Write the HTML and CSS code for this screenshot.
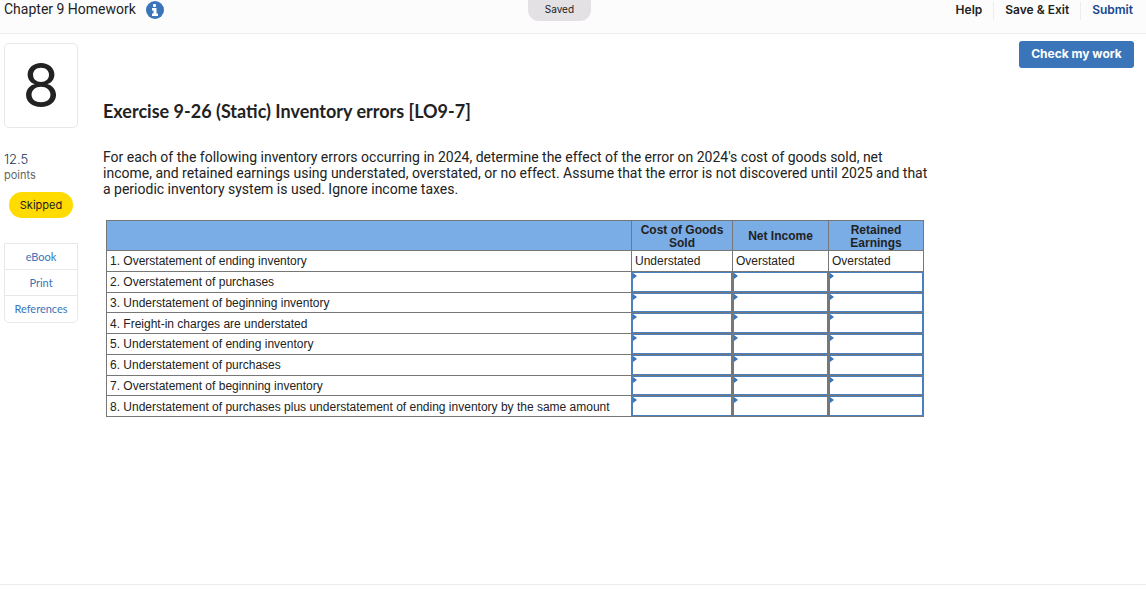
FILE: index.html
```html
<!DOCTYPE html>
<html lang="en">
<head>
  <meta charset="UTF-8" />
  <title>Chapter 9 Homework</title>
  <link rel="stylesheet" href="styles.css">
</head>
<body>
  <header class="topbar">
    <div class="assignment">
      <span>Chapter 9 Homework</span>
      <button type="button" class="info" aria-label="Assignment info">
        <svg width="18" height="18" viewBox="0 0 18 18">
          <circle cx="9" cy="9" r="9" fill="#3a75ba" />
          <rect x="7" y="3" width="3" height="3" rx="1" fill="#fff" />
          <path d="M6 7h4.5v5.5H12V15H6v-2.500h1.500V9.500H6z" fill="#fff" />
        </svg>
      </button>
    </div>
    <span class="saved">Saved</span>
    <nav class="actions">
      <a href="#">Help</a>
      <a href="#">Save &amp; Exit</a>
      <a href="#" class="submit">Submit</a>
    </nav>
  </header>

  <main class="page">
    <aside class="sidebar">
      <div class="number">8</div>
      <div class="points">12.5</div>
      <div class="points-label">points</div>
      <span class="skipped">Skipped</span>
      <nav class="resources">
        <a href="#">eBook</a>
        <a href="#">Print</a>
        <a href="#">References</a>
      </nav>
    </aside>

    <section class="question">
      <button type="button" class="check">Check my work</button>
      <h1>Exercise 9-26 (Static) Inventory errors [LO9-7]</h1>
      <p>
        For each of the following inventory errors occurring in 2024, determine the effect of the error on 2024's cost of goods sold, net<br>
        income, and retained earnings using understated, overstated, or no effect. Assume that the error is not discovered until 2025 and that<br>
        a periodic inventory system is used. Ignore income taxes.
      </p>

      <table class="answers">
        <colgroup>
          <col>
          <col class="col-goods">
          <col class="col-income">
          <col class="col-earnings">
        </colgroup>
        <thead>
          <tr>
            <td></td>
            <th scope="col">Cost of Goods Sold</th>
            <th scope="col">Net Income</th>
            <th scope="col">Retained Earnings</th>
          </tr>
        </thead>
        <tbody id="answer-rows">
          <tr>
            <th scope="row">1. Overstatement of ending inventory</th>
            <td>Understated</td>
            <td>Overstated</td>
            <td>Overstated</td>
          </tr>
        </tbody>
      </table>
    </section>
  </main>

  <footer class="bottombar"></footer>

  <script src="script.js"></script>
</body>
</html>
```
FILE: styles.css
```css
* {
  box-sizing: border-box;
}

body {
  margin: 0;
  min-height: 100vh;
  display: flex;
  flex-direction: column;
  font-family: 'Inter', sans-serif;
  font-size: 14px;
  color: #222;
  background-color: #fff;
}

a {
  text-decoration: none;
}

button {
  font-family: inherit;
  border: none;
  cursor: pointer;
}

/* Top bar */
.topbar {
  display: grid;
  grid-template-columns: 29fr auto 30fr;
  height: 34px;
  padding: 0 13px 0 4px;
  background-color: #fcfcfc;
  border-bottom: 1px solid #ececec;
}

.assignment {
  display: flex;
  align-items: flex-end;
  gap: 10px;
  height: 19px;
  line-height: 19px;
  font-family: 'Roboto', sans-serif;
}

.info {
  display: flex;
  padding: 0;
  background: none;
}

.saved {
  width: 63px;
  height: 21px;
  line-height: 18px;
  text-align: center;
  font-size: 10px;
  background-color: #e4e1e5;
  border-radius: 0 0 11px 11px;
}

.actions {
  display: flex;
  justify-content: flex-end;
  padding-top: 2px;
}

.actions a {
  height: 18px;
  line-height: 16px;
  padding: 0 11px;
  font-size: 12px;
  font-weight: 600;
  color: #222;
  border-right: 1px solid #ececec;
}

.actions .submit {
  padding-right: 0;
  color: #16478e;
  border-right: none;
}

/* Page */
.page {
  flex: 1;
  display: flex;
  gap: 25px;
  padding: 7px 12px 0 4px;
}

.sidebar {
  width: 74px;
  padding-top: 2px;
}

.number {
  height: 85px;
  line-height: 83px;
  text-align: center;
  font-size: 60px;
  border: 1px solid #e8e8e8;
  border-radius: 5px;
}

.points {
  margin-top: 23px;
  line-height: 16px;
  font-size: 13px;
  font-weight: 300;
  color: #16365c;
}

.points-label {
  line-height: 16px;
  font-size: 11px;
  color: #666;
}

.skipped {
  display: block;
  width: 64px;
  margin: 9px auto 25px;
  line-height: 26px;
  text-align: center;
  font-size: 11px;
  background-color: #ffdb00;
  border-radius: 13px;
}

.resources {
  padding-bottom: 1px;
  border: 1px solid #e8e8e8;
  border-radius: 0 0 5px 5px;
}

.resources a {
  display: block;
  line-height: 25px;
  text-align: center;
  font-family: 'Lato', sans-serif;
  font-size: 11px;
  color: #3a75ba;
}

.resources a + a {
  border-top: 1px solid #e8e8e8;
}

.question {
  flex: 1;
}

.check {
  display: block;
  width: 115px;
  height: 27px;
  margin-left: auto;
  padding: 0 0 2px;
  font-size: 12px;
  font-weight: 700;
  color: #fff;
  background-color: #3a75ba;
  border-radius: 3px;
}

h1 {
  margin: 33px 0 0;
  line-height: 20px;
  font-family: 'Lato', sans-serif;
  font-size: 18px;
  font-weight: 700;
}

.question p {
  margin: 28px 0 23px;
  line-height: 16px;
  font-family: 'Roboto', sans-serif;
  white-space: nowrap;
}

/* Answer table */
.answers {
  width: 818px;
  height: 197px;
  margin-left: 3px;
  table-layout: fixed;
  border-collapse: collapse;
  font-family: 'Liberation Sans', sans-serif;
  font-size: 12px;
  line-height: 13px;
}

.col-goods {
  width: 101px;
}

.col-income {
  width: 96px;
}

.col-earnings {
  width: 95px;
}

.answers th,
.answers td {
  padding: 2px 3px 0;
  border: 1px solid #777;
}

.answers thead tr {
  height: 30px;
  background-color: #7aace6;
}

.answers thead th {
  padding: 2px 8px 0;
}

.answers tbody tr {
  height: 20px;
}

.answers tbody th {
  text-align: left;
  font-weight: 400;
}

.answers .choice {
  position: relative;
  height: 20px;
  padding: 0;
}

/* marker in the corner of every drop-down cell */
.choice::before {
  content: '';
  position: absolute;
  top: 1px;
  left: 1px;
  border: 3px solid transparent;
  border-left: 4px solid #3a75ba;
  border-right: none;
  pointer-events: none;
}

.choice select {
  display: block;
  appearance: none;
  width: 100%;
  height: 100%;
  padding: 0 6px;
  font: inherit;
  background: none;
  border: 1px solid #4a80c0;
  border-radius: 0;
}

.bottombar {
  height: 5px;
  border-top: 1px solid #ececec;
}
```
FILE: script.js
```js
const columns = ['Cost of Goods Sold', 'Net Income', 'Retained Earnings'];

const errors = [
  '2. Overstatement of purchases',
  '3. Understatement of beginning inventory',
  '4. Freight-in charges are understated',
  '5. Understatement of ending inventory',
  '6. Understatement of purchases',
  '7. Overstatement of beginning inventory',
  '8. Understatement of purchases plus understatement of ending inventory by the same amount'
];

const rows = document.getElementById('answer-rows');

errors.forEach((error) => {
  const cells = columns.map((column) => `
    <td class="choice">
      <select aria-label="${error}, ${column}">
        <option></option>
        <option>Understated</option>
        <option>Overstated</option>
        <option>No effect</option>
      </select>
    </td>`).join('');

  rows.insertAdjacentHTML('beforeend', `<tr><th scope="row">${error}</th>${cells}</tr>`);
});
```
